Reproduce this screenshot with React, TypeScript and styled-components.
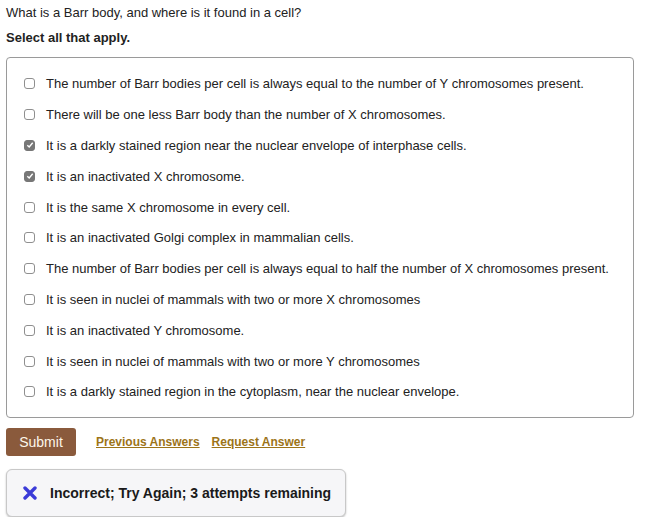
import React from "react";
import styled, { createGlobalStyle } from "styled-components";

const Global = createGlobalStyle`
  body { margin: 0; background: #fff; font-family: "Liberation Sans", Arial, sans-serif; color: #222; }
`;

const Page = styled.div`
  padding: 5px 16px 0 6px;
  width: 628px;
`;

const Question = styled.p`
  margin: 0;
  font-size: 13px;
  line-height: 15px;
`;

const Instruction = styled.p`
  margin: 10px 0 0;
  font-size: 13px;
  line-height: 15px;
  font-weight: bold;
`;

const Panel = styled.div`
  margin-top: 12px;
  border: 1px solid #9a9a9a;
  border-radius: 4px;
  padding: 10.5px 0 10px 16px;
`;

const Row = styled.label`
  display: flex;
  align-items: center;
  height: 30.8px;
  font-size: 13px;
  gap: 11px;
`;

const Box = styled.span<{ $checked?: boolean }>`
  width: 11px;
  height: 11px;
  box-sizing: border-box;
  border-radius: 3px;
  border: 1px solid ${(p) => (p.$checked ? "#777" : "#8f8f8f")};
  background: ${(p) => (p.$checked ? "#777" : "#fff")};
  display: flex;
  align-items: center;
  justify-content: center;
  margin-left: 1px;
`;

const Actions = styled.div`
  display: flex;
  align-items: center;
  margin-top: 10px;
  gap: 20px;
`;

const SubmitButton = styled.button`
  width: 70px;
  height: 28px;
  border: none;
  border-radius: 3px;
  background: #8a5a3c;
  color: #fdf6ea;
  font-family: "Liberation Sans", Arial, sans-serif;
  font-size: 14px;
  padding: 0;
`;

const Links = styled.div`
  display: flex;
  gap: 12px;
`;

const Link = styled.a`
  font-size: 12px;
  font-weight: bold;
  color: #9c7418;
  text-decoration: underline;
`;

const Feedback = styled.div`
  margin-top: 13px;
  width: 340px;
  height: 48px;
  box-sizing: border-box;
  border: 1px solid #c8c8c8;
  border-radius: 6px;
  background: #f6f6f8;
  box-shadow: 0 1px 2px rgba(0, 0, 0, 0.25);
  display: flex;
  align-items: center;
  padding-left: 16px;
  gap: 13px;
  font-size: 14px;
  font-weight: bold;
  color: #1a1a1a;
`;

const options: [string, boolean][] = [
  ["The number of Barr bodies per cell is always equal to the number of Y chromosomes present.", false],
  ["There will be one less Barr body than the number of X chromosomes.", false],
  ["It is a darkly stained region near the nuclear envelope of interphase cells.", true],
  ["It is an inactivated X chromosome.", true],
  ["It is the same X chromosome in every cell.", false],
  ["It is an inactivated Golgi complex in mammalian cells.", false],
  ["The number of Barr bodies per cell is always equal to half the number of X chromosomes present.", false],
  ["It is seen in nuclei of mammals with two or more X chromosomes", false],
  ["It is an inactivated Y chromosome.", false],
  ["It is seen in nuclei of mammals with two or more Y chromosomes", false],
  ["It is a darkly stained region in the cytoplasm, near the nuclear envelope.", false],
];

export default function App() {
  return (
    <Page>
      <Global />
      <Question>What is a Barr body, and where is it found in a cell?</Question>
      <Instruction>Select all that apply.</Instruction>
      <Panel>
        {options.map(([text, checked], i) => (
          <Row key={i}>
            <Box $checked={checked}>
              {checked && (
                <svg width="8" height="8" viewBox="0 0 8 8">
                  <path d="M1.3 4.2 L3.2 6 L6.7 1.8" stroke="#fff" strokeWidth="1.4" fill="none" />
                </svg>
              )}
            </Box>
            <span>{text}</span>
          </Row>
        ))}
      </Panel>
      <Actions>
        <SubmitButton>Submit</SubmitButton>
        <Links>
          <Link>Previous Answers</Link>
          <Link>Request Answer</Link>
        </Links>
      </Actions>
      <Feedback>
        <svg width="14" height="14" viewBox="0 0 14 14">
          <path d="M2 2 L12 12 M12 2 L2 12" stroke="#3b3bd8" strokeWidth="3.4" strokeLinecap="round" />
        </svg>
        <span>Incorrect; Try Again; 3 attempts remaining</span>
      </Feedback>
    </Page>
  );
}
